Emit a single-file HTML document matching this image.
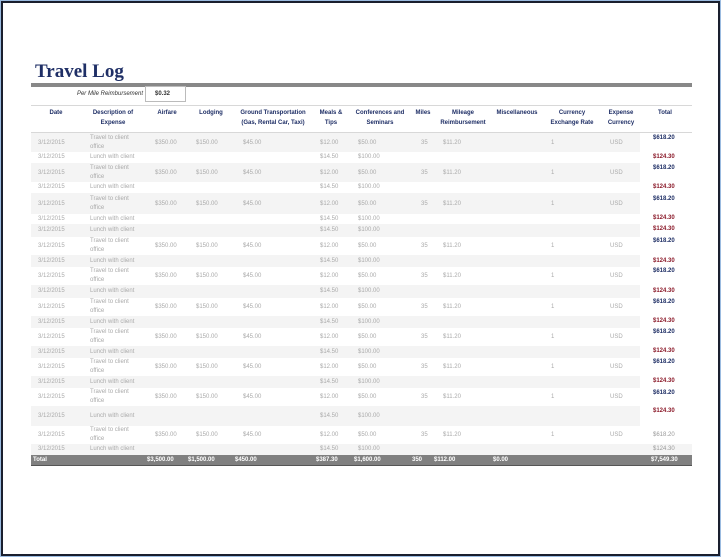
<!DOCTYPE html>
<html><head><meta charset="utf-8"><style>
*{margin:0;padding:0;box-sizing:border-box}
html,body{width:721px;height:557px;overflow:hidden;background:#fff}
body{position:relative;font-family:"Liberation Sans",sans-serif}
.frame{position:absolute;left:0;top:0;width:721px;height:557px;border:1px solid #9bbbe0}
.frame2{position:absolute;left:1px;top:1px;width:719px;height:555px;border:2px solid #1a1f2e}
.title{position:absolute;left:35px;top:61px;font-family:"Liberation Serif",serif;font-weight:bold;font-size:19px;color:#1f2f66}
.bar{position:absolute;left:31px;top:83px;width:661px;height:4px;background:#888}
.pm{position:absolute;left:60px;top:91px;width:83px;text-align:right;font-size:6px;font-style:italic;color:#333}
.box{position:absolute;left:145px;top:86px;width:41px;height:16px;border:1px solid #bbb;font-size:6px;color:#333;padding:4px 0 0 9px;font-weight:bold}
.hl{position:absolute;left:31px;width:661px;height:1px;background:#d8d8d8}
.h{position:absolute;top:108px;font-size:6px;font-weight:bold;color:#1f2f66;text-align:center;line-height:10px}
.r{position:absolute;left:31px;width:609px}
.s{background:#f4f4f4}
.r span{position:absolute;font-size:6px;color:#aaa;white-space:nowrap;line-height:9px}
.t{position:absolute;left:653px;font-size:6px;font-weight:bold;line-height:9px}
.tb{color:#1f2f66}.tr{color:#8b1a2a}.tg{color:#999;font-weight:normal}
.tot{position:absolute;left:31px;top:455px;width:661px;height:11px;background:#808080;border-bottom:1px solid #555}
.tot span{position:absolute;top:2px;font-size:6px;font-weight:bold;color:#fff}
</style></head><body>
<div class="frame"></div><div class="frame2"></div>
<div class="title">Travel Log</div>
<div class="bar"></div>
<div class="pm">Per Mile Reimbursement</div>
<div class="box">$0.32</div>
<div class="hl" style="top:105px"></div>
<div class="hl" style="top:132px"></div>
<div class="h" style="left:36px;width:40px">Date</div>
<div class="h" style="left:83px;width:60px">Description of<br>Expense</div>
<div class="h" style="left:150px;width:34px">Airfare</div>
<div class="h" style="left:194px;width:34px">Lodging</div>
<div class="h" style="left:233px;width:80px">Ground Transportation<br>(Gas, Rental Car, Taxi)</div>
<div class="h" style="left:316px;width:30px">Meals &amp;<br>Tips</div>
<div class="h" style="left:350px;width:60px">Conferences and<br>Seminars</div>
<div class="h" style="left:412px;width:22px">Miles</div>
<div class="h" style="left:433px;width:60px">Mileage<br>Reimbursement</div>
<div class="h" style="left:492px;width:50px">Miscellaneous</div>
<div class="h" style="left:546px;width:52px">Currency<br>Exchange Rate</div>
<div class="h" style="left:600px;width:42px">Expense<br>Currency</div>
<div class="h" style="left:650px;width:30px">Total</div>

<div class="r s" style="top:133px;height:19px"><span style="left:7px;top:6px">3/12/2015</span><span style="left:59px;top:1px">Travel to client<br>office</span><span style="left:124px;top:6px">$350.00</span><span style="left:165px;top:6px">$150.00</span><span style="left:212px;top:6px">$45.00</span><span style="left:289px;top:6px">$12.00</span><span style="left:327px;top:6px">$50.00</span><span style="left:390px;top:6px">35</span><span style="left:412px;top:6px">$11.20</span><span style="left:520px;top:6px">1</span><span style="left:579px;top:6px">USD</span></div>
<div class="t tb" style="top:134px">$618.20</div>
<div class="r" style="top:152px;height:11px"><span style="left:7px;top:1px">3/12/2015</span><span style="left:59px;top:1px">Lunch with client</span><span style="left:289px;top:1px">$14.50</span><span style="left:327px;top:1px">$100.00</span></div>
<div class="t tr" style="top:153px">$124.30</div>
<div class="r s" style="top:163px;height:19px"><span style="left:7px;top:6px">3/12/2015</span><span style="left:59px;top:1px">Travel to client<br>office</span><span style="left:124px;top:6px">$350.00</span><span style="left:165px;top:6px">$150.00</span><span style="left:212px;top:6px">$45.00</span><span style="left:289px;top:6px">$12.00</span><span style="left:327px;top:6px">$50.00</span><span style="left:390px;top:6px">35</span><span style="left:412px;top:6px">$11.20</span><span style="left:520px;top:6px">1</span><span style="left:579px;top:6px">USD</span></div>
<div class="t tb" style="top:164px">$618.20</div>
<div class="r" style="top:182px;height:11px"><span style="left:7px;top:1px">3/12/2015</span><span style="left:59px;top:1px">Lunch with client</span><span style="left:289px;top:1px">$14.50</span><span style="left:327px;top:1px">$100.00</span></div>
<div class="t tr" style="top:183px">$124.30</div>
<div class="r s" style="top:193px;height:21px"><span style="left:7px;top:7px">3/12/2015</span><span style="left:59px;top:2px">Travel to client<br>office</span><span style="left:124px;top:7px">$350.00</span><span style="left:165px;top:7px">$150.00</span><span style="left:212px;top:7px">$45.00</span><span style="left:289px;top:7px">$12.00</span><span style="left:327px;top:7px">$50.00</span><span style="left:390px;top:7px">35</span><span style="left:412px;top:7px">$11.20</span><span style="left:520px;top:7px">1</span><span style="left:579px;top:7px">USD</span></div>
<div class="t tb" style="top:195px">$618.20</div>
<div class="r" style="top:214px;height:10px"><span style="left:7px;top:1px">3/12/2015</span><span style="left:59px;top:1px">Lunch with client</span><span style="left:289px;top:1px">$14.50</span><span style="left:327px;top:1px">$100.00</span></div>
<div class="t tr" style="top:214px">$124.30</div>
<div class="r s" style="top:224px;height:13px"><span style="left:7px;top:2px">3/12/2015</span><span style="left:59px;top:2px">Lunch with client</span><span style="left:289px;top:2px">$14.50</span><span style="left:327px;top:2px">$100.00</span></div>
<div class="t tr" style="top:225px">$124.30</div>
<div class="r" style="top:237px;height:18px"><span style="left:7px;top:5px">3/12/2015</span><span style="left:59px;top:0px">Travel to client<br>office</span><span style="left:124px;top:5px">$350.00</span><span style="left:165px;top:5px">$150.00</span><span style="left:212px;top:5px">$45.00</span><span style="left:289px;top:5px">$12.00</span><span style="left:327px;top:5px">$50.00</span><span style="left:390px;top:5px">35</span><span style="left:412px;top:5px">$11.20</span><span style="left:520px;top:5px">1</span><span style="left:579px;top:5px">USD</span></div>
<div class="t tb" style="top:237px">$618.20</div>
<div class="r s" style="top:255px;height:12px"><span style="left:7px;top:2px">3/12/2015</span><span style="left:59px;top:2px">Lunch with client</span><span style="left:289px;top:2px">$14.50</span><span style="left:327px;top:2px">$100.00</span></div>
<div class="t tr" style="top:257px">$124.30</div>
<div class="r" style="top:267px;height:18px"><span style="left:7px;top:5px">3/12/2015</span><span style="left:59px;top:0px">Travel to client<br>office</span><span style="left:124px;top:5px">$350.00</span><span style="left:165px;top:5px">$150.00</span><span style="left:212px;top:5px">$45.00</span><span style="left:289px;top:5px">$12.00</span><span style="left:327px;top:5px">$50.00</span><span style="left:390px;top:5px">35</span><span style="left:412px;top:5px">$11.20</span><span style="left:520px;top:5px">1</span><span style="left:579px;top:5px">USD</span></div>
<div class="t tb" style="top:267px">$618.20</div>
<div class="r s" style="top:285px;height:13px"><span style="left:7px;top:2px">3/12/2015</span><span style="left:59px;top:2px">Lunch with client</span><span style="left:289px;top:2px">$14.50</span><span style="left:327px;top:2px">$100.00</span></div>
<div class="t tr" style="top:287px">$124.30</div>
<div class="r" style="top:298px;height:18px"><span style="left:7px;top:5px">3/12/2015</span><span style="left:59px;top:0px">Travel to client<br>office</span><span style="left:124px;top:5px">$350.00</span><span style="left:165px;top:5px">$150.00</span><span style="left:212px;top:5px">$45.00</span><span style="left:289px;top:5px">$12.00</span><span style="left:327px;top:5px">$50.00</span><span style="left:390px;top:5px">35</span><span style="left:412px;top:5px">$11.20</span><span style="left:520px;top:5px">1</span><span style="left:579px;top:5px">USD</span></div>
<div class="t tb" style="top:298px">$618.20</div>
<div class="r s" style="top:316px;height:12px"><span style="left:7px;top:2px">3/12/2015</span><span style="left:59px;top:2px">Lunch with client</span><span style="left:289px;top:2px">$14.50</span><span style="left:327px;top:2px">$100.00</span></div>
<div class="t tr" style="top:317px">$124.30</div>
<div class="r" style="top:328px;height:18px"><span style="left:7px;top:5px">3/12/2015</span><span style="left:59px;top:0px">Travel to client<br>office</span><span style="left:124px;top:5px">$350.00</span><span style="left:165px;top:5px">$150.00</span><span style="left:212px;top:5px">$45.00</span><span style="left:289px;top:5px">$12.00</span><span style="left:327px;top:5px">$50.00</span><span style="left:390px;top:5px">35</span><span style="left:412px;top:5px">$11.20</span><span style="left:520px;top:5px">1</span><span style="left:579px;top:5px">USD</span></div>
<div class="t tb" style="top:328px">$618.20</div>
<div class="r s" style="top:346px;height:12px"><span style="left:7px;top:2px">3/12/2015</span><span style="left:59px;top:2px">Lunch with client</span><span style="left:289px;top:2px">$14.50</span><span style="left:327px;top:2px">$100.00</span></div>
<div class="t tr" style="top:347px">$124.30</div>
<div class="r" style="top:358px;height:18px"><span style="left:7px;top:5px">3/12/2015</span><span style="left:59px;top:0px">Travel to client<br>office</span><span style="left:124px;top:5px">$350.00</span><span style="left:165px;top:5px">$150.00</span><span style="left:212px;top:5px">$45.00</span><span style="left:289px;top:5px">$12.00</span><span style="left:327px;top:5px">$50.00</span><span style="left:390px;top:5px">35</span><span style="left:412px;top:5px">$11.20</span><span style="left:520px;top:5px">1</span><span style="left:579px;top:5px">USD</span></div>
<div class="t tb" style="top:358px">$618.20</div>
<div class="r s" style="top:376px;height:12px"><span style="left:7px;top:2px">3/12/2015</span><span style="left:59px;top:2px">Lunch with client</span><span style="left:289px;top:2px">$14.50</span><span style="left:327px;top:2px">$100.00</span></div>
<div class="t tr" style="top:377px">$124.30</div>
<div class="r" style="top:388px;height:18px"><span style="left:7px;top:5px">3/12/2015</span><span style="left:59px;top:0px">Travel to client<br>office</span><span style="left:124px;top:5px">$350.00</span><span style="left:165px;top:5px">$150.00</span><span style="left:212px;top:5px">$45.00</span><span style="left:289px;top:5px">$12.00</span><span style="left:327px;top:5px">$50.00</span><span style="left:390px;top:5px">35</span><span style="left:412px;top:5px">$11.20</span><span style="left:520px;top:5px">1</span><span style="left:579px;top:5px">USD</span></div>
<div class="t tb" style="top:389px">$618.20</div>
<div class="r s" style="top:406px;height:20px"><span style="left:7px;top:6px">3/12/2015</span><span style="left:59px;top:6px">Lunch with client</span><span style="left:289px;top:6px">$14.50</span><span style="left:327px;top:6px">$100.00</span></div>
<div class="t tr" style="top:407px">$124.30</div>
<div class="r" style="top:426px;height:18px"><span style="left:7px;top:5px">3/12/2015</span><span style="left:59px;top:0px">Travel to client<br>office</span><span style="left:124px;top:5px">$350.00</span><span style="left:165px;top:5px">$150.00</span><span style="left:212px;top:5px">$45.00</span><span style="left:289px;top:5px">$12.00</span><span style="left:327px;top:5px">$50.00</span><span style="left:390px;top:5px">35</span><span style="left:412px;top:5px">$11.20</span><span style="left:520px;top:5px">1</span><span style="left:579px;top:5px">USD</span></div>
<div class="t tg" style="top:431px">$618.20</div>
<div class="r s" style="top:444px;height:11px;width:661px"><span style="left:7px;top:1px">3/12/2015</span><span style="left:59px;top:1px">Lunch with client</span><span style="left:289px;top:1px">$14.50</span><span style="left:327px;top:1px">$100.00</span></div>
<div class="t tg" style="top:445px">$124.30</div>

<div class="tot"><span style="left:2px">Total</span><span style="left:116px">$3,500.00</span><span style="left:157px">$1,500.00</span><span style="left:204px">$450.00</span><span style="left:285px">$387.30</span><span style="left:323px">$1,600.00</span><span style="left:381px">350</span><span style="left:403px">$112.00</span><span style="left:462px">$0.00</span><span style="left:620px">$7,549.30</span></div>
</body></html>
